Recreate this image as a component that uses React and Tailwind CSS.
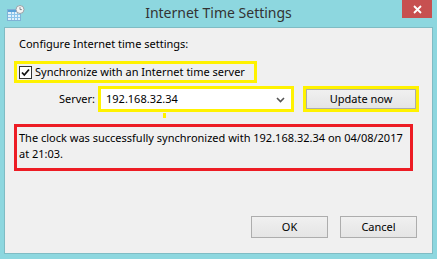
import React from "react";

function TitleIcon() {
  return (
    <svg width="18" height="16" viewBox="0 0 18 16">
      <rect x="0.5" y="4.5" width="13" height="11" fill="#dff0fb" stroke="#7fb2d6" />
      <rect x="1" y="5" width="12" height="2" fill="#5aa0d8" />
      <g stroke="#8cc4ea" strokeWidth="1">
        <line x1="4.5" y1="7" x2="4.5" y2="15" />
        <line x1="7.5" y1="7" x2="7.5" y2="15" />
        <line x1="10.5" y1="7" x2="10.5" y2="15" />
        <line x1="1" y1="9.5" x2="13" y2="9.5" />
        <line x1="1" y1="12.5" x2="13" y2="12.5" />
      </g>
      <circle cx="13" cy="4.5" r="4" fill="#f4f4f4" stroke="#9aa2a8" />
      <path d="M13 2.2 V4.6 H14.8" stroke="#707880" strokeWidth="0.9" fill="none" />
    </svg>
  );
}

export default function App() {
  const font = { fontFamily: '"Noto Sans", "Segoe UI", sans-serif' };
  return (
    <div className="w-[437px] h-[259px] bg-[#8dd7df] flex flex-col overflow-hidden" style={font}>
      <div className="h-[27px] grid grid-cols-[1fr_auto_1fr] items-start">
        <div className="pl-[7px] pt-[5px]">
          <TitleIcon />
        </div>
        <div className="pt-[4px] text-[14px] leading-[18px] text-[#333333]">Internet Time Settings</div>
        <div className="flex justify-end pr-[5px]">
          <div className="w-[30px] h-[18px] bg-[#c75050] flex items-center justify-center">
            <svg width="9" height="9" viewBox="0 0 9 9">
              <path d="M1 1 L8 8 M8 1 L1 8" stroke="white" strokeWidth="1.8" />
            </svg>
          </div>
        </div>
      </div>
      <div className="mx-[4px] h-[227px] border border-[#7fbcc4] bg-[#f0f0f0] flex flex-col text-[11px] text-black">
        <div className="mt-[8px] ml-[14px] h-[16px] leading-[16px]">Configure Internet time settings:</div>
        <div className="mt-[9px] ml-[9px] w-[243px] h-[22px] border-[3px] border-[#fff200] flex items-center pl-[2px]">
          <div className="w-[13px] h-[13px] border border-[#333333] bg-white flex items-center justify-center shrink-0">
            <svg width="11" height="11" viewBox="0 0 11 11">
              <path d="M2 5.5 L4.3 8 L9 2.5" stroke="#111" strokeWidth="1.8" fill="none" />
            </svg>
          </div>
          <span className="ml-[3px] leading-[16px] whitespace-nowrap">Synchronize with an Internet time server</span>
        </div>
        <div className="mt-[3px] h-[26px] flex items-center">
          <span className="ml-[54px] w-[39px] leading-[16px]">Server:</span>
          <div className="relative w-[196px] h-[26px] border-[3px] border-[#fff200] bg-white flex items-center">
            <span className="ml-[5px] leading-[16px]">192.168.32.34</span>
            <svg className="absolute right-[6px] top-[8px]" width="9" height="6" viewBox="0 0 9 6">
              <path d="M1 1 L4.5 4.5 L8 1" stroke="#555" strokeWidth="1.6" fill="none" />
            </svg>
            <div className="absolute left-[62px] top-[24px] w-[3px] h-[5px] bg-[#fff200]" />
          </div>
          <div className="ml-[9px] w-[116px] h-[26px] border-[3px] border-[#fff200]">
            <div className="w-full h-full border border-[#acacac] bg-gradient-to-b from-[#f0f0f0] to-[#e5e5e5] flex items-center justify-center leading-[16px]">
              Update now
            </div>
          </div>
        </div>
        <div className="mt-[12px] ml-[9px] w-[399px] h-[47px] border-[3px] border-[#ed1c24] pl-[2px] pt-[3px] leading-[16px]">
          The clock was successfully synchronized with 192.168.32.34 on 04/08/2017 at 21:03.
        </div>
        <div className="mt-auto mb-[15px] mr-[15px] flex justify-end gap-[12px]">
          <div className="w-[77px] h-[22px] border border-[#adadad] bg-gradient-to-b from-[#f0f0f0] to-[#e5e5e5] flex items-center justify-center">OK</div>
          <div className="w-[77px] h-[22px] border border-[#adadad] bg-gradient-to-b from-[#f0f0f0] to-[#e5e5e5] flex items-center justify-center">Cancel</div>
        </div>
      </div>
    </div>
  );
}
